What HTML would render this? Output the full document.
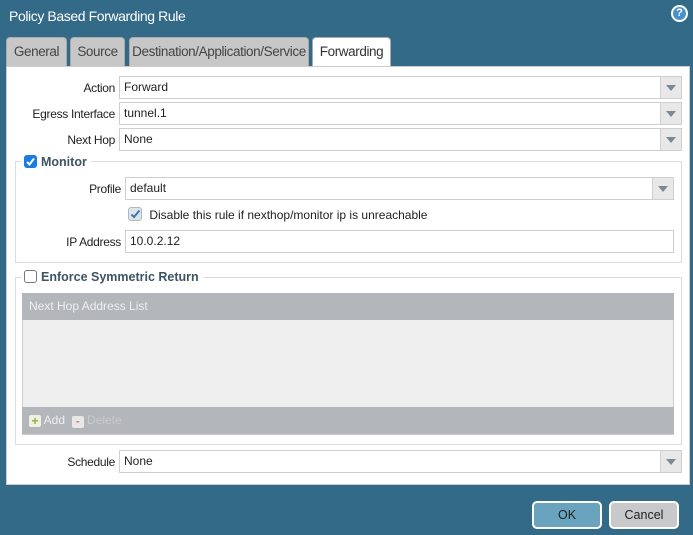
<!DOCTYPE html>
<html><head><style>
*{box-sizing:border-box;margin:0;padding:0}
body{width:693px;height:535px;background:#336a87;font-family:"Liberation Sans",sans-serif;position:relative;overflow:hidden;font-size:12px;color:#222}
.a{position:absolute}
.title{left:9px;top:8px;color:#fff;font-size:14px;letter-spacing:-0.4px}
.help{left:671px;top:5px;width:17px;height:17px;border-radius:50%;background:#4a90c8;border:2px solid #fff;color:#fff;font-size:11px;font-weight:bold;text-align:center;line-height:13px}
.tab{top:37px;height:29px;background:#c7c7c7;border:1px solid #aaa;border-bottom:none;border-radius:4px 4px 0 0;text-align:center;line-height:28px;font-size:13.5px;color:#444;letter-spacing:-0.4px}
.panel{left:6px;top:66px;width:684px;height:419px;background:#fff;border:1px solid #ccc}
.lbl{text-align:right;font-size:12px;letter-spacing:-0.3px}
.sel{height:23px;border:1px solid #cfcfcf;background:#fff;padding-left:4px;line-height:21px;font-size:12px}
.sel .dd{position:absolute;right:0;top:0;width:21px;height:21px;background:#e8e8e8;border-left:1px solid #cfcfcf}
.sel .dd:after{content:"";position:absolute;left:5px;top:8px;border-left:5px solid transparent;border-right:5px solid transparent;border-top:6px solid #7b8a96}
.fs{border:1px solid #ddd}
.leg{background:#fff;font-weight:bold;color:#3c5463;font-size:12.5px;padding:0 4px 0 2px}
.cb{display:inline-block;width:13px;height:13px;border-radius:3px;vertical-align:-2px;margin-right:4px}
.btn{top:501px;height:28px;width:70px;border:2px solid #fff;border-radius:5px;text-align:center;line-height:24px;font-size:12.5px;color:#222}
</style></head><body>
<div class="a title">Policy Based Forwarding Rule</div>
<div class="a help">?</div>
<div class="a tab" style="left:6px;width:61px">General</div>
<div class="a tab" style="left:70px;width:55px">Source</div>
<div class="a tab" style="left:129px;width:180px">Destination/Application/Service</div>
<div class="a tab" style="left:312px;width:79px;background:#fff;height:30px;color:#333">Forwarding</div>
<div class="a panel"></div>

<div class="a lbl" style="left:20px;top:81px;width:95px">Action</div>
<div class="a sel" style="left:119px;top:76px;width:563px">Forward<span class="dd"></span></div>
<div class="a lbl" style="left:20px;top:107px;width:95px">Egress Interface</div>
<div class="a sel" style="left:119px;top:102px;width:563px">tunnel.1<span class="dd"></span></div>
<div class="a lbl" style="left:20px;top:133px;width:95px">Next Hop</div>
<div class="a sel" style="left:119px;top:128px;width:563px">None<span class="dd"></span></div>

<div class="a fs" style="left:15px;top:161px;width:667px;height:102px"></div>
<div class="a leg" style="left:22px;top:155px"><span class="cb" style="background:#1a7be0"><svg width="13" height="13" viewBox="0 0 13 13"><path d="M3 7l2.5 2.5L10 3.5" stroke="#fff" stroke-width="2" fill="none"/></svg></span>Monitor</div>
<div class="a lbl" style="left:30px;top:182px;width:91px">Profile</div>
<div class="a sel" style="left:125px;top:177px;width:549px">default<span class="dd"></span></div>
<div class="a" style="left:128px;top:207px;font-size:12px"><span class="cb" style="background:#dde4ea;border:1px solid #b0b8c0;width:14px;height:14px"><svg width="13" height="13" viewBox="0 0 13 13"><path d="M2.5 6.5l2.5 2.5L10.5 2.5" stroke="#3a78b0" stroke-width="2" fill="none"/></svg></span> Disable this rule if nexthop/monitor ip is unreachable</div>
<div class="a lbl" style="left:30px;top:235px;width:91px">IP Address</div>
<div class="a sel" style="left:125px;top:230px;width:549px">10.0.2.12</div>

<div class="a fs" style="left:15px;top:277px;width:667px;height:168px"></div>
<div class="a leg" style="left:22px;top:270px"><span class="cb" style="border:1px solid #777;background:#fff"></span>Enforce Symmetric Return</div>
<div class="a" style="left:22px;top:293px;width:652px;height:142px;background:#efefef;border:1px solid #ccc"></div>
<div class="a" style="left:22px;top:293px;width:652px;height:27px;background:#b3b6ba;color:#eef0f2;line-height:27px;padding-left:7px;font-size:12px">Next Hop Address List</div>
<div class="a" style="left:22px;top:407px;width:652px;height:27px;background:#b3b6ba;line-height:27px;padding-left:7px;font-size:12px;color:#eef0f2">
<span style="display:inline-block;width:12px;height:12px;background:#eef0e0;border-radius:2px;vertical-align:-1px;color:#8ab04a;font-weight:bold;line-height:12px;text-align:center;font-size:12px">+</span> Add &nbsp;<span style="display:inline-block;width:12px;height:12px;background:#e8e8e8;border-radius:2px;vertical-align:-1px;color:#c09090;font-weight:bold;line-height:11px;text-align:center">-</span> <span style="color:#c8cacc">Delete</span></div>

<div class="a lbl" style="left:20px;top:455px;width:95px">Schedule</div>
<div class="a sel" style="left:119px;top:450px;width:563px">None<span class="dd"></span></div>

<div class="a btn" style="left:532px;background:#6aa3be">OK</div>
<div class="a btn" style="left:609px;background:#c7c9cb">Cancel</div>
</body></html>
